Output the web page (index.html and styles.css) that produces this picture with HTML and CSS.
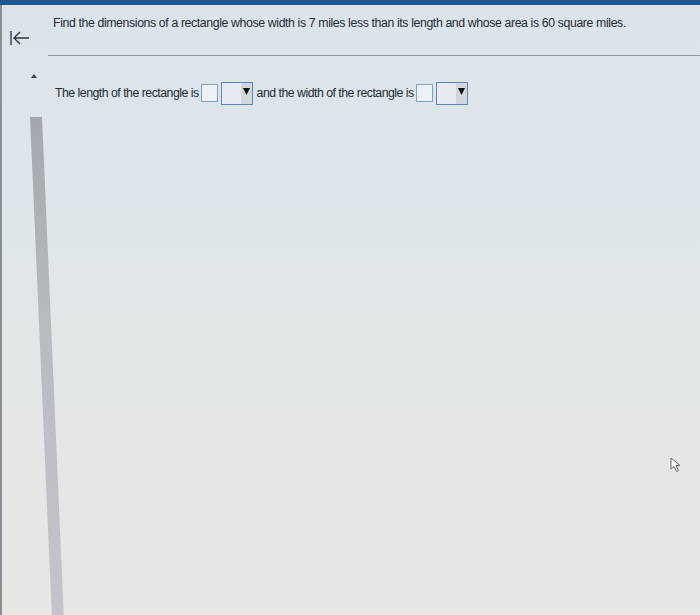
FILE: index.html
```
<!DOCTYPE html>
<html>
<head>
<meta charset="utf-8">
<link rel="stylesheet" href="styles.css">
</head>
<body>
<div class="topbar"></div>
<div class="main">
  <div class="side">
    <div class="back">
      <svg width="22" height="16" viewBox="0 0 22 16"><path d="M2 1 V15 M20 8 H5 M11 2 L5 8 L11 14" fill="none" stroke="#2a3440" stroke-width="1.3"/></svg>
    </div>
    <div class="uparrow"><svg width="6" height="4" viewBox="0 0 6 4"><path d="M0 4 L3 0 L6 4 Z" fill="#3a4450"/></svg></div>
    <div class="track"><div class="thumb"></div></div>
  </div>
  <div class="content">
    <p class="question">Find the dimensions of a rectangle whose width is 7 miles less than its length and whose area is 60 square miles.</p>
    <div class="rule"></div>
    <div class="answer">
      <span>The length of the rectangle is</span>
      <span class="box"></span>
      <span class="select"><span class="btn"><svg width="7" height="7" viewBox="0 0 7 7"><path d="M0 0 H7 L3.5 7 Z" fill="#111"/></svg></span></span>
      <span>and the width of the rectangle is</span>
      <span class="box"></span>
      <span class="select"><span class="btn"><svg width="7" height="7" viewBox="0 0 7 7"><path d="M0 0 H7 L3.5 7 Z" fill="#111"/></svg></span></span>
    </div>
  </div>
</div>
<svg class="cursor" width="12" height="16" viewBox="0 0 12 16"><path d="M1 1 L1 12 L4 9.5 L6.5 14.5 L8.5 13.5 L6 8.5 L10 8.5 Z" fill="#f4f4f2" stroke="#6a6e72" stroke-width="1"/></svg>
</body>
</html>
```
FILE: styles.css
```
html, body {
  margin: 0;
  padding: 0;
}
body {
  width: 700px;
  height: 615px;
  overflow: hidden;
  position: relative;
  font-family: "Liberation Sans", Arial, sans-serif;
  color: #262b33;
  background: linear-gradient(to bottom, #dbe4eb 0%, #dfe6ea 35%, #e4e7e6 70%, #e7e7e4 100%);
}
.topbar {
  height: 5px;
  background: #1f5790;
}
.main {
  display: flex;
  height: 610px;
}
.side {
  width: 48px;
  flex: none;
  display: flex;
  flex-direction: column;
  border-left: 2px solid #8a8e92;
  box-sizing: border-box;
}
.back {
  margin: 25px 0 0 7px;
  height: 16px;
}
.uparrow {
  margin: 27px 0 0 29px;
  height: 4px;
  line-height: 0;
}
.track {
  flex: 1;
  margin-top: 40px;
  padding-left: 28px;
}
.thumb {
  width: 12px;
  height: 100%;
  background: linear-gradient(to bottom, #a4a8ad 0%, #b7bbc0 40%, #c4c5cb 100%);
  transform-origin: top left;
  transform: skewX(2.5deg);
}
.content {
  flex: 1;
}
.question {
  margin: 10px 0 0 5px;
  font-size: 12.3px;
  line-height: 16px;
  letter-spacing: -0.38px;
}
.rule {
  margin-top: 24px;
  height: 1px;
  background: #8e9ba6;
}
.answer {
  margin: 25px 0 0 7px;
  display: flex;
  align-items: center;
  font-size: 12.3px;
  letter-spacing: -0.5px;
  height: 24px;
}
.box {
  width: 15px;
  height: 16px;
  border: 1px solid #7f9fcc;
  background: #eef2f6;
  margin: 0 3px 0 2px;
  flex: none;
}
.select {
  width: 30px;
  height: 21px;
  border: 1px solid #5f85b8;
  background: #e6ecf1;
  margin: 0 4px 0 0;
  display: flex;
  justify-content: flex-end;
  flex: none;
}
.btn {
  width: 11px;
  background: #d3d7db;
  display: flex;
  align-items: center;
  justify-content: center;
  padding-bottom: 3px;
  box-sizing: border-box;
}
.cursor {
  position: absolute;
  left: 670px;
  top: 457px;
}
```
